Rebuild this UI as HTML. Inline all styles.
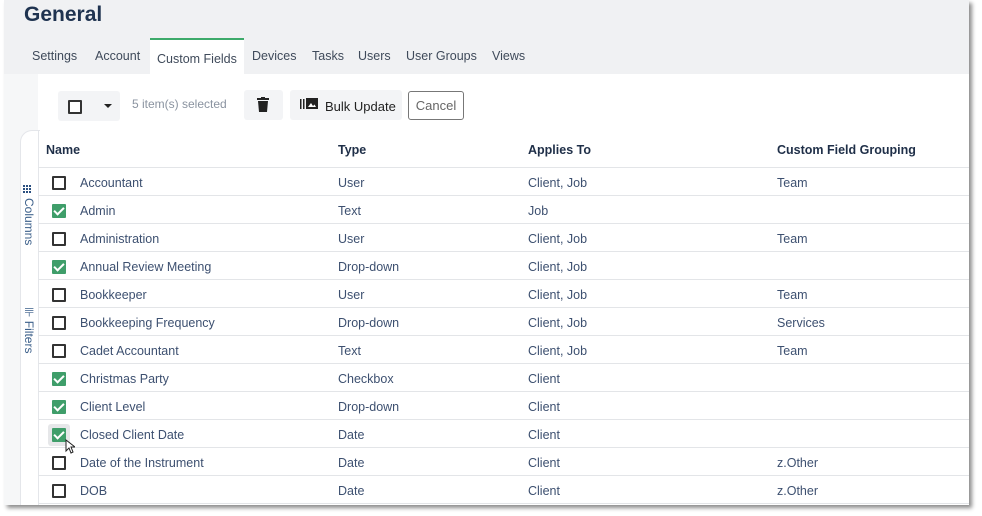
<!DOCTYPE html>
<html><head><style>
*{box-sizing:border-box;margin:0;padding:0}
body{width:982px;height:516px;background:#fff;font-family:"Liberation Sans",sans-serif;position:relative;overflow:hidden;color:#3b4a63}
.frame{position:absolute;left:4px;top:0;width:965px;height:505px;background:#fff;box-shadow:3px 3px 4px rgba(0,0,0,.45);overflow:hidden}
.hdr{position:absolute;left:0;top:0;width:965px;height:74px;background:#f0f1f3}
h1{position:absolute;left:20px;top:3px;font-size:21px;font-weight:bold;color:#1f3350}
.tab{position:absolute;top:49px;font-size:12.5px;color:#3f4a5a;white-space:nowrap}
.tab.act{top:38px;height:36px;background:#fff;border-top:2px solid #3daa6a;padding:12px 0 0 7px;width:94px;color:#3f4a5a}
.side{position:absolute;left:0;top:74px;width:34px;height:431px;background:#f6f7f8}
.sidep{position:absolute;left:16px;top:130px;width:20px;height:380px;background:#fff;border:1px solid #e4e6ea;border-right:none;border-radius:12px 0 0 0}
.vt{position:absolute;font-size:12px;color:#3b5f8a;transform:rotate(90deg);transform-origin:left top;white-space:nowrap}
.btn{position:absolute;background:#f3f4f6;border-radius:3px}
.cb{position:absolute;width:14px;height:14px;border:2px solid #333;border-radius:1px;background:#fff}
.cb.on{border:none;background:#3f9e6a}
.cb.on:after{content:"";position:absolute;left:4px;top:1px;width:4px;height:8px;border:solid #fff;border-width:0 2px 2px 0;transform:rotate(45deg)}
.row{position:absolute;left:34px;width:931px;height:28px;border-bottom:1px solid #e3e5e8;font-size:12.5px;color:#3d5070}
.row span{position:absolute;top:8px}
.th{position:absolute;top:143px;font-size:12.5px;font-weight:bold;color:#1f2f48}
</style></head><body>
<div class="frame">
<div class="hdr"></div>
<h1>General</h1>
<div class="tab" style="left:28px">Settings</div>
<div class="tab" style="left:91px">Account</div>
<div class="tab act" style="left:146px">Custom Fields</div>
<div class="tab" style="left:248px">Devices</div>
<div class="tab" style="left:308px">Tasks</div>
<div class="tab" style="left:354px">Users</div>
<div class="tab" style="left:402px">User Groups</div>
<div class="tab" style="left:488px">Views</div>

<div class="btn" style="left:54px;top:91px;width:62px;height:30px"></div>
<div class="cb" style="left:64px;top:100px"></div>
<div style="position:absolute;left:100px;top:104px;border:4px solid transparent;border-top:4px solid #222;border-bottom:none"></div>
<div style="position:absolute;left:128px;top:97px;font-size:12px;color:#8a93a0">5 item(s) selected</div>
<div class="btn" style="left:240px;top:90px;width:39px;height:30px"></div>
<svg style="position:absolute;left:253px;top:97px" width="12" height="15" viewBox="0 0 12 15"><rect x="0" y="1" width="12" height="2" fill="#222"/><rect x="4" y="0" width="4" height="2" fill="#222"/><path d="M1 4h10l-1 11H2z" fill="#222"/></svg>
<div class="btn" style="left:286px;top:90px;width:112px;height:30px"></div>
<svg style="position:absolute;left:296px;top:98px" width="18" height="13" viewBox="0 0 18 13"><rect x="0" y="1" width="1.5" height="10" fill="#222"/><rect x="3" y="1" width="1.5" height="10" fill="#222"/><rect x="6" y="0" width="12" height="11" fill="#222"/><path d="M8 9l3-4 2 3 1.5-1.5L16 9z" fill="#fff"/></svg>
<div style="position:absolute;left:321px;top:99px;font-size:13px;color:#222">Bulk Update</div>
<div style="position:absolute;left:404px;top:91px;width:56px;height:29px;border:1px solid #777;border-radius:3px;font-size:13px;color:#666;text-align:center;line-height:28px">Cancel</div>

<div class="side"></div>
<div class="sidep"></div>
<div style="position:absolute;left:34px;top:130px;width:1px;height:380px;background:#e4e6ea"></div>
<svg style="position:absolute;left:19px;top:185px" width="10" height="10"><g fill="#2a4f80"><rect x="0" y="0" width="2" height="2"/><rect x="3" y="0" width="2" height="2"/><rect x="6" y="0" width="2" height="2"/><rect x="0" y="3" width="2" height="2"/><rect x="3" y="3" width="2" height="2"/><rect x="6" y="3" width="2" height="2"/><rect x="0" y="6" width="2" height="2"/><rect x="3" y="6" width="2" height="2"/><rect x="6" y="6" width="2" height="2"/></g></svg>
<div class="vt" style="left:32px;top:198px">Columns</div>
<div class="vt" style="left:32px;top:307px">⊪ Filters</div>

<div class="th" style="left:42px">Name</div>
<div class="th" style="left:334px">Type</div>
<div class="th" style="left:524px">Applies To</div>
<div class="th" style="left:773px">Custom Field Grouping</div>
<div style="position:absolute;left:34px;top:167px;width:931px;height:1px;background:#e3e5e8"></div>

<div class="row" style="top:168px"><div class="cb" style="left:14px;top:8px"></div><span style="left:42px">Accountant</span><span style="left:300px">User</span><span style="left:490px">Client, Job</span><span style="left:739px">Team</span></div>
<div class="row" style="top:196px"><div class="cb on" style="left:14px;top:8px"></div><span style="left:42px">Admin</span><span style="left:300px">Text</span><span style="left:490px">Job</span></div>
<div class="row" style="top:224px"><div class="cb" style="left:14px;top:8px"></div><span style="left:42px">Administration</span><span style="left:300px">User</span><span style="left:490px">Client, Job</span><span style="left:739px">Team</span></div>
<div class="row" style="top:252px"><div class="cb on" style="left:14px;top:8px"></div><span style="left:42px">Annual Review Meeting</span><span style="left:300px">Drop-down</span><span style="left:490px">Client, Job</span></div>
<div class="row" style="top:280px"><div class="cb" style="left:14px;top:8px"></div><span style="left:42px">Bookkeeper</span><span style="left:300px">User</span><span style="left:490px">Client, Job</span><span style="left:739px">Team</span></div>
<div class="row" style="top:308px"><div class="cb" style="left:14px;top:8px"></div><span style="left:42px">Bookkeeping Frequency</span><span style="left:300px">Drop-down</span><span style="left:490px">Client, Job</span><span style="left:739px">Services</span></div>
<div class="row" style="top:336px"><div class="cb" style="left:14px;top:8px"></div><span style="left:42px">Cadet Accountant</span><span style="left:300px">Text</span><span style="left:490px">Client, Job</span><span style="left:739px">Team</span></div>
<div class="row" style="top:364px"><div class="cb on" style="left:14px;top:8px"></div><span style="left:42px">Christmas Party</span><span style="left:300px">Checkbox</span><span style="left:490px">Client</span></div>
<div class="row" style="top:392px"><div class="cb on" style="left:14px;top:8px"></div><span style="left:42px">Client Level</span><span style="left:300px">Drop-down</span><span style="left:490px">Client</span></div>
<div class="row" style="top:420px"><div style="position:absolute;left:10px;top:4px;width:22px;height:22px;background:#e6e7e9;border-radius:3px"></div><div class="cb on" style="left:14px;top:8px"></div><span style="left:42px">Closed Client Date</span><span style="left:300px">Date</span><span style="left:490px">Client</span>
<svg style="position:absolute;left:27px;top:19px" width="10" height="15" viewBox="0 0 10 15"><path d="M1 1v11l3-3 2 5 2-1-2-5h4z" fill="#fff" stroke="#222"/></svg></div>
<div class="row" style="top:448px"><div class="cb" style="left:14px;top:8px"></div><span style="left:42px">Date of the Instrument</span><span style="left:300px">Date</span><span style="left:490px">Client</span><span style="left:739px">z.Other</span></div>
<div class="row" style="top:476px"><div class="cb" style="left:14px;top:8px"></div><span style="left:42px">DOB</span><span style="left:300px">Date</span><span style="left:490px">Client</span><span style="left:739px">z.Other</span></div>
</div>
</body></html>
